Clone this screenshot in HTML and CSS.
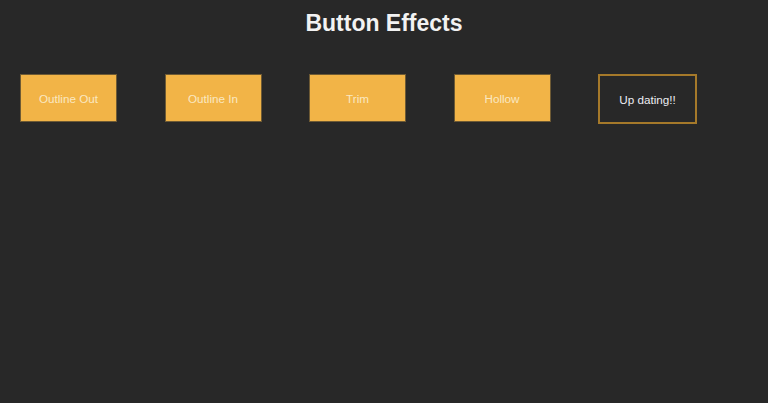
FILE: index.html
```html
<!DOCTYPE html>
<html>
<head>
<meta charset="utf-8">
<link rel="stylesheet" href="styles.css">
</head>
<body>
<h1 class="title">Button Effects</h1>
<div class="row">
  <button class="btn">Outline Out</button>
  <button class="btn">Outline In</button>
  <button class="btn">Trim</button>
  <button class="btn">Hollow</button>
  <button class="btn btn-ghost">Up dating!!</button>
</div>
</body>
</html>
```

FILE: styles.css
```css
html, body {
  margin: 0;
  padding: 0;
  background: #282828;
  height: 100%;
}
body {
  font-family: "Liberation Sans", Arial, sans-serif;
}
.title {
  margin: 0;
  padding-top: 10px;
  text-align: center;
  font-size: 23px;
  font-weight: bold;
  color: #f2f2f2;
  line-height: 27px;
}
.row {
  display: flex;
  gap: 47.5px;
  padding-left: 20px;
  margin-top: 37px;
  align-items: flex-start;
}
.btn {
  box-sizing: border-box;
  width: 97px;
  height: 48px;
  background: #f2b447;
  border: 1px solid #6e5a34;
  color: #fae8c2;
  font-family: "Liberation Sans", Arial, sans-serif;
  font-size: 11.7px;
  padding: 0;
  margin: 0;
}
.btn-ghost {
  width: 99px;
  height: 50px;
  background: transparent;
  border: 2px solid #a5792a;
  color: #ececf2;
}
```
